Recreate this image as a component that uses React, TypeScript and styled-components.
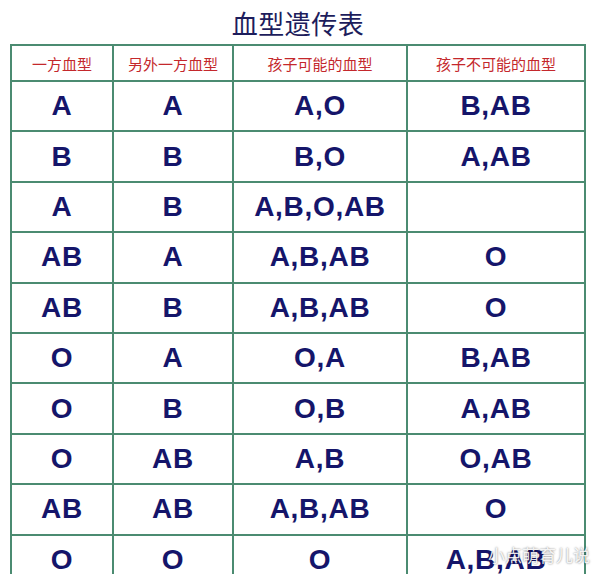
import styled, { createGlobalStyle } from 'styled-components';

const GlobalStyle = createGlobalStyle`
  html, body {
    margin: 0;
    padding: 0;
    background: #ffffff;
    overflow: hidden;
  }
`;

const rows: string[][] = [
  ['A', 'A', 'A,O', 'B,AB'],
  ['B', 'B', 'B,O', 'A,AB'],
  ['A', 'B', 'A,B,O,AB', ''],
  ['AB', 'A', 'A,B,AB', 'O'],
  ['AB', 'B', 'A,B,AB', 'O'],
  ['O', 'A', 'O,A', 'B,AB'],
  ['O', 'B', 'O,B', 'A,AB'],
  ['O', 'AB', 'A,B', 'O,AB'],
  ['AB', 'AB', 'A,B,AB', 'O'],
  ['O', 'O', 'O', 'A,B,AB'],
];

const headers = ['一方血型', '另外一方血型', '孩子可能的血型', '孩子不可能的血型'];
const widths = [102, 120, 174, 178];

const BloodTypeTable = () => {
  return (
    <Page>
      <GlobalStyle />
      <Title>血型遗传表</Title>
      <Table>
        <colgroup>
          {widths.map((w, i) => (
            <col key={i} style={{ width: w }} />
          ))}
        </colgroup>
        <thead>
          <tr>
            {headers.map((h) => (
              <Th key={h}>{h}</Th>
            ))}
          </tr>
        </thead>
        <tbody>
          {rows.map((r, i) => (
            <tr key={i}>
              {r.map((c, j) => (
                <Td key={j}>{c}</Td>
              ))}
            </tr>
          ))}
        </tbody>
      </Table>
      <Watermark>小点萌育儿说</Watermark>
    </Page>
  );
};

export default BloodTypeTable;

const Page = styled.div`
  position: relative;
  width: 596px;
  height: 574px;
  overflow: hidden;
  padding-left: 10px;
  box-sizing: border-box;
`;

const Title = styled.div`
  height: 44px;
  display: flex;
  align-items: center;
  justify-content: center;
  padding-right: 10px;
  font-family: 'Noto Sans CJK SC', sans-serif;
  font-size: 26px;
  color: #1d1d5c;
  letter-spacing: 0.5px;
`;

const Table = styled.table`
  border-collapse: collapse;
  table-layout: fixed;
  width: 576px;
`;

const Th = styled.th`
  height: 34px;
  padding: 0;
  border: 2px solid #4b8b71;
  font-family: 'Noto Sans CJK SC', sans-serif;
  font-weight: 400;
  font-size: 15px;
  color: #c4282c;
  text-align: center;
  vertical-align: middle;
`;

const Td = styled.td`
  height: 48.4px;
  padding: 0;
  border: 2px solid #4b8b71;
  font-family: 'Liberation Sans', Arial, sans-serif;
  font-weight: 700;
  font-size: 28px;
  letter-spacing: 0.7px;
  color: #15156a;
  text-align: center;
  vertical-align: middle;
`;

const Watermark = styled.div`
  position: absolute;
  right: 6px;
  bottom: 7px;
  font-family: 'Noto Sans CJK SC', sans-serif;
  font-size: 17px;
  color: rgba(255, 255, 255, 0.9);
  text-shadow: 0 0 2px rgba(0, 0, 0, 0.55);
`;
